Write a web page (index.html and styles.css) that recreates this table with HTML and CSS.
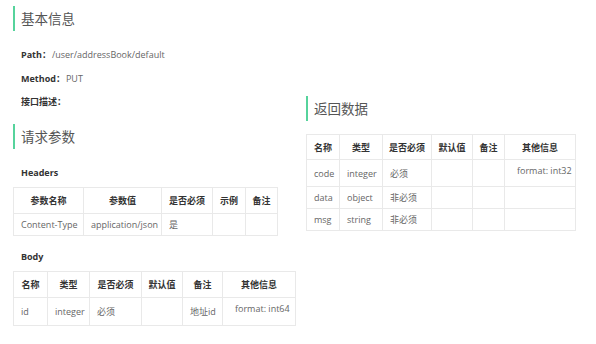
FILE: index.html
```html
<!DOCTYPE html>
<html lang="zh">
<head>
<meta charset="utf-8">
<link rel="stylesheet" href="styles.css">
</head>
<body>
<div class="page">
  <div class="col left">
    <h2 class="title t1">基本信息</h2>
    <div class="meta m1"><span class="lbl">Path：</span><span class="val">/user/addressBook/default</span></div>
    <div class="meta"><span class="lbl">Method：</span><span class="val">PUT</span></div>
    <div class="meta"><span class="lbl">接口描述：</span></div>
    <h2 class="title t2">请求参数</h2>
    <div class="sub s1">Headers</div>
    <table class="tbl th-tbl">
      <tr class="hr26"><th>参数名称</th><th>参数值</th><th>是否必须</th><th>示例</th><th>备注</th></tr>
      <tr class="hr22"><td>Content-Type</td><td>application/json</td><td>是</td><td></td><td></td></tr>
    </table>
    <div class="sub s2">Body</div>
    <table class="tbl body-tbl">
      <tr class="hr26"><th>名称</th><th>类型</th><th>是否必须</th><th>默认值</th><th>备注</th><th>其他信息</th></tr>
      <tr class="hr28"><td>id</td><td>integer</td><td>必须</td><td></td><td>地址id</td><td class="top">format: int64</td></tr>
    </table>
  </div>
  <div class="col right">
    <h2 class="title t3">返回数据</h2>
    <table class="tbl ret-tbl">
      <tr class="hr25"><th>名称</th><th>类型</th><th>是否必须</th><th>默认值</th><th>备注</th><th>其他信息</th></tr>
      <tr class="hr27"><td>code</td><td>integer</td><td>必须</td><td></td><td></td><td class="top">format: int32</td></tr>
      <tr class="hr22"><td>data</td><td>object</td><td>非必须</td><td></td><td></td><td></td></tr>
      <tr class="hr22"><td>msg</td><td>string</td><td>非必须</td><td></td><td></td><td></td></tr>
    </table>
  </div>
</div>
</body>
</html>
```
FILE: styles.css
```css
html, body {
  margin: 0;
  padding: 0;
  background: #fff;
}
body {
  font-family: "Open Sans", "Noto Sans CJK SC", sans-serif;
  font-size: 9px;
  color: #666;
}
.page {
  display: flex;
  width: 596px;
  height: 344px;
}
.col {
  display: flex;
  flex-direction: column;
  align-items: flex-start;
}
.left {
  margin-left: 13px;
  width: 282px;
}
.right {
  margin-left: 11px;
  width: 280px;
}
.title {
  margin: 0;
  border-left: 2px solid #56d39c;
  padding-left: 6px;
  height: 25px;
  line-height: 25px;
  font-size: 13.5px;
  font-weight: normal;
  color: #555;
  font-family: "Noto Sans CJK SC", sans-serif;
}
.t1 { margin-top: 6px; }
.t2 { margin-top: 10px; }
.t3 { margin-top: 96px; }
.meta {
  height: 23.5px;
  line-height: 23.5px;
  padding-left: 8px;
}
.m1 { margin-top: 12px; }
.lbl {
  font-weight: bold;
  color: #333;
}
.val {
  color: #666;
  margin-left: 1px;
}
.sub {
  font-weight: bold;
  color: #333;
  height: 14px;
  line-height: 14px;
  padding-left: 8px;
}
.s1 { margin-top: 17px; margin-bottom: 7px; }
.s2 { margin-top: 14px; margin-bottom: 7px; }
.tbl {
  border-collapse: collapse;
  table-layout: fixed;
}
.tbl th, .tbl td {
  box-sizing: border-box;
  border: 1px solid #e9e9e9;
  padding: 0 0 0 7px;
  white-space: nowrap;
  overflow: hidden;
  color: #666;
  font-weight: normal;
  text-align: left;
}
.tbl th {
  padding: 0;
  text-align: center;
  font-weight: bold;
  color: #333;
}
.tbl td.top {
  padding-bottom: 5px;
  padding-left: 12px;
}
.hr22 { height: 22px; }
.hr25 { height: 25px; }
.hr26 { height: 26px; }
.hr27 { height: 27px; }
.hr28 { height: 28px; }
.th-tbl { width: 264px; }
.th-tbl th:nth-child(1) { width: 70px; }
.th-tbl th:nth-child(2) { width: 78px; }
.th-tbl th:nth-child(3) { width: 51px; }
.th-tbl th:nth-child(4) { width: 33px; }
.th-tbl th:nth-child(5) { width: 32px; }
.body-tbl { width: 282px; }
.body-tbl th:nth-child(1) { width: 34px; }
.body-tbl th:nth-child(2) { width: 42px; }
.body-tbl th:nth-child(3) { width: 52px; }
.body-tbl th:nth-child(4) { width: 41px; }
.body-tbl th:nth-child(5) { width: 40px; }
.body-tbl th:nth-child(6) { width: 73px; }
.ret-tbl { width: 269px; margin-top: 13px; }
.ret-tbl th:nth-child(1) { width: 33px; }
.ret-tbl th:nth-child(2) { width: 43px; }
.ret-tbl th:nth-child(3) { width: 49px; }
.ret-tbl th:nth-child(4) { width: 41px; }
.ret-tbl th:nth-child(5) { width: 32px; }
.ret-tbl th:nth-child(6) { width: 71px; }
```
